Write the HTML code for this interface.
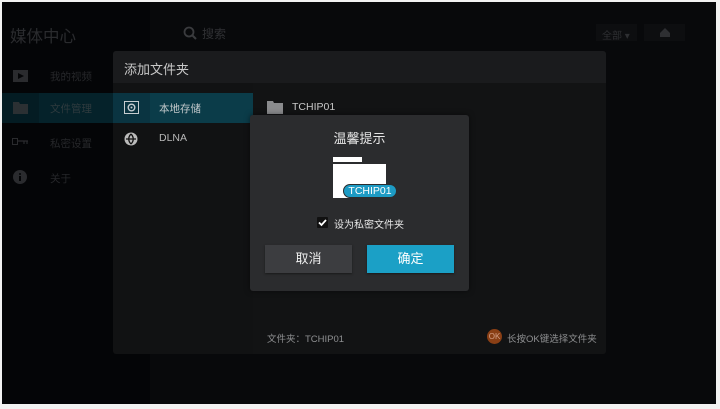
<!DOCTYPE html>
<html><head><meta charset="utf-8"><style>
*{margin:0;padding:0;box-sizing:border-box}
body{width:720px;height:409px;background:#f2f2f2;font-family:"Liberation Sans","Noto Sans CJK SC",sans-serif;position:relative;overflow:hidden}
.a{position:absolute}
.t{position:absolute;white-space:nowrap}
</style></head><body>
<div class="a" style="left:2px;top:2px;width:714px;height:402px;background:#08090b"></div>
<div class="a" style="left:2px;top:2px;width:148px;height:402px;background:#040507"></div>
<div class="t" style="left:10px;top:23px;font-size:16.5px;color:#2a2b2e">媒体中心</div>
<svg class="a" style="left:183px;top:26px" width="14" height="14"><circle cx="6" cy="6" r="4.5" fill="none" stroke="#3a3b3e" stroke-width="1.8"/><line x1="9.5" y1="9.5" x2="13" y2="13" stroke="#3a3b3e" stroke-width="2"/></svg>
<div class="t" style="left:202px;top:25px;font-size:12px;color:#303134">搜索</div>
<div class="a" style="left:596px;top:24px;width:41px;height:17px;background:#0d0e10"></div>
<div class="t" style="left:602px;top:27px;font-size:10px;color:#2e2f32">全部 ▾</div>
<div class="a" style="left:644px;top:24px;width:41px;height:17px;background:#0d0e10"></div>
<svg class="a" style="left:659px;top:27px" width="12" height="11"><path d="M6 1L11 6V10H1V6Z" fill="#2e2f32"/></svg>
<svg class="a" style="left:13px;top:70px" width="15" height="12"><rect width="15" height="12" fill="#2a2b2e"/><path d="M5 3L11 6L5 9Z" fill="#040507"/></svg>
<div class="t" style="left:50px;top:69px;font-size:10.5px;color:#26272a">我的视频</div>
<div class="a" style="left:2px;top:93px;width:148px;height:30px;background:#05222a"></div>
<div class="a" style="left:2px;top:93px;width:37px;height:30px;background:#041c23"></div>
<svg class="a" style="left:13px;top:101px" width="15" height="13"><path d="M0 1H6L7 3H15V13H0Z" fill="#2b3033"/></svg>
<div class="t" style="left:50px;top:101px;font-size:10.5px;color:#2e3a3e">文件管理</div>
<svg class="a" style="left:12px;top:138px" width="17" height="8"><rect x="0.5" y="0.5" width="5" height="6" fill="none" stroke="#2a2b2e"/><path d="M6 3H16M12 3V6M15 3V6" stroke="#2a2b2e" stroke-width="1.2"/></svg>
<div class="t" style="left:50px;top:136px;font-size:10.5px;color:#26272a">私密设置</div>
<svg class="a" style="left:13px;top:170px" width="14" height="14"><circle cx="7" cy="7" r="7" fill="#2a2b2e"/><rect x="6" y="6" width="2" height="5" fill="#040507"/><circle cx="7" cy="4" r="1" fill="#040507"/></svg>
<div class="t" style="left:50px;top:171px;font-size:10.5px;color:#26272a">关于</div>
<div class="a" style="left:113px;top:51px;width:493px;height:303px;background:#111213;border-radius:3px;overflow:hidden">
 <div class="a" style="left:0;top:0;width:493px;height:32px;background:#1a1b1d"></div>
 <div class="t" style="left:11px;top:8px;font-size:13px;color:#c8c8c8">添加文件夹</div>
 <div class="a" style="left:140px;top:32px;width:353px;height:271px;background:#121314"></div>
 <div class="a" style="left:0;top:42px;width:140px;height:30px;background:#0b3c49"></div>
 <div class="a" style="left:0;top:42px;width:37px;height:30px;background:#0a3441"></div>
 <svg class="a" style="left:11px;top:50px" width="15" height="13"><rect x="0.5" y="0.5" width="14" height="12" fill="none" stroke="#c6cdd0"/><circle cx="7.5" cy="6.5" r="3.3" fill="none" stroke="#c6cdd0" stroke-width="1.4"/><circle cx="7.5" cy="6.5" r="1" fill="#c6cdd0"/></svg>
 <div class="t" style="left:46px;top:50px;font-size:10.5px;color:#c2c8ca">本地存储</div>
 <svg class="a" style="left:11px;top:81px" width="14" height="14"><circle cx="7" cy="7" r="6.5" fill="#bbb"/><path d="M2 7H12M7 2C4 5 4 9 7 12M7 2C10 5 10 9 7 12" stroke="#111" stroke-width="1.3" fill="none"/></svg>
 <div class="t" style="left:46px;top:81px;font-size:10.5px;color:#b8b8b8">DLNA</div>
 <svg class="a" style="left:154px;top:50px" width="16" height="13"><path d="M0 0H6L7 2H16V13H0Z" fill="#8a8b8d"/></svg>
 <div class="t" style="left:179px;top:50px;font-size:10.5px;color:#c8c8c8">TCHIP01</div>
 <div class="t" style="left:154px;top:280px;font-size:9.5px;color:#8e8f91">文件夹：TCHIP01</div>
 <div class="a" style="left:374px;top:278px;width:15px;height:15px;border-radius:50%;background:#8a3f15;color:#d4a088;font-size:8px;line-height:15px;text-align:center">OK</div>
 <div class="t" style="left:394px;top:280px;font-size:9.5px;color:#8e8f91">长按OK键选择文件夹</div>
</div>
<div class="a" style="left:250px;top:115px;width:219px;height:176px;background:#2b2c2e;border-radius:3px;box-shadow:0 0 6px rgba(0,0,0,.5)"></div>
<div class="t" style="left:250px;top:128px;width:219px;text-align:center;font-size:13px;color:#e6e6e6">温馨提示</div>
<div class="a" style="left:333px;top:157px;width:29px;height:5px;background:#fff"></div>
<div class="a" style="left:333px;top:164px;width:53px;height:34px;background:#fff"></div>
<div class="a" style="left:343px;top:184px;width:54px;height:14px;border-radius:7px;background:#1d9bc4;border:1px solid #2b2c2e;color:#fff;font-size:10.5px;line-height:12px;text-align:center">TCHIP01</div>
<div class="a" style="left:317px;top:217px;width:11px;height:11px;background:#111;border-radius:1px"></div>
<svg class="a" style="left:317px;top:217px" width="11" height="11"><path d="M2 5.5L4.5 8L9 3" stroke="#fff" stroke-width="1.8" fill="none"/></svg>
<div class="t" style="left:334px;top:216px;font-size:10px;color:#e6e6e6">设为私密文件夹</div>
<div class="a" style="left:265px;top:245px;width:87px;height:28px;background:#3c3d40;color:#eee;font-size:13px;line-height:28px;text-align:center;box-shadow:0 1px 2px #1a1a1a">取消</div>
<div class="a" style="left:367px;top:245px;width:87px;height:28px;background:#1ba0c6;color:#fff;font-size:13px;line-height:28px;text-align:center;box-shadow:0 1px 2px #1a1a1a">确定</div>
</body></html>
